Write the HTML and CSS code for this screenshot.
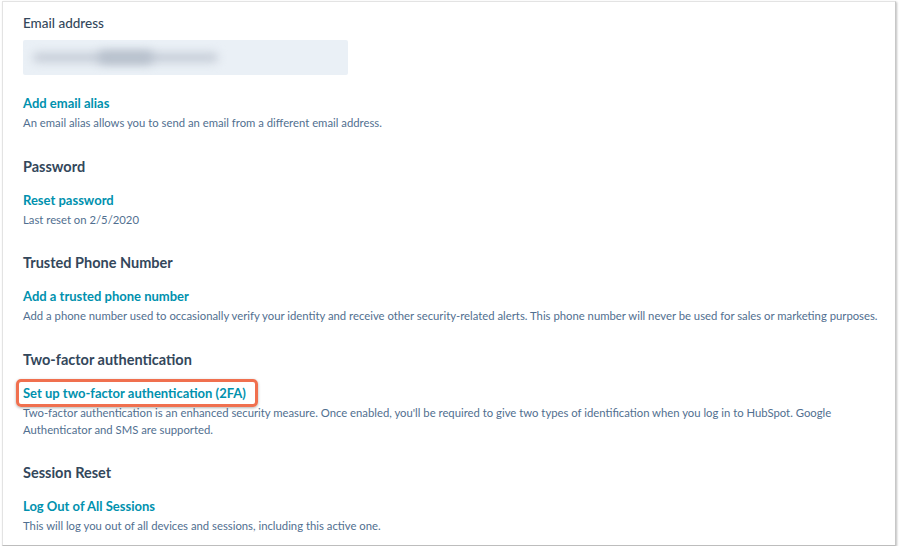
FILE: index.html
```html
<!DOCTYPE html>
<html>
<head>
<meta charset="utf-8">
<link rel="stylesheet" href="styles.css">
</head>
<body>
<div class="window">
  <div class="content">
    <div class="field-label">Email address</div>
    <div class="input"><div class="blur"></div><div class="blur blur2"></div></div>
    <div class="link first-link">Add email alias</div>
    <div class="desc">An email alias allows you to send an email from a different email address.</div>

    <div class="heading">Password</div>
    <div class="link">Reset password</div>
    <div class="desc">Last reset on 2/5/2020</div>

    <div class="heading">Trusted Phone Number</div>
    <div class="link">Add a trusted phone number</div>
    <div class="desc">Add a phone number used to occasionally verify your identity and receive other security-related alerts. This phone number will never be used for sales or marketing purposes.</div>

    <div class="heading">Two-factor authentication</div>
    <div class="link"><span class="highlight">Set up two-factor authentication (2FA)</span></div>
    <div class="desc">Two-factor authentication is an enhanced security measure. Once enabled, you'll be required to give two types of identification when you log in to HubSpot. Google Authenticator and SMS are supported.</div>

    <div class="heading">Session Reset</div>
    <div class="link">Log Out of All Sessions</div>
    <div class="desc">This will log you out of all devices and sessions, including this active one.</div>
  </div>
</div>
</body>
</html>
```
FILE: styles.css
```css
html, body {
  margin: 0;
  padding: 0;
  background: #ffffff;
}
body {
  font-family: Lato, "Open Sans", sans-serif;
  -webkit-font-smoothing: antialiased;
}
.window {
  margin: 1px 0 0 2px;
  width: 894px;
  height: 545px;
  border: 1px solid #e3e3e3;
  border-right-color: #c8c8c8;
  border-bottom-color: #bdbdbd;
  box-shadow: 1px 1px 2px rgba(0,0,0,0.25);
  box-sizing: border-box;
  overflow: hidden;
  background: #fff;
}
.content {
  padding: 13px 0 0 20px;
}
.field-label {
  font-size: 13.5px;
  color: #33475b;
  line-height: 16px;
  font-weight: 500;
}
.input {
  margin-top: 9px;
  width: 325px;
  height: 35px;
  background: #eaf0f6;
  border-radius: 2px;
  position: relative;
  overflow: hidden;
}
.blur {
  position: absolute;
  left: 10px;
  top: 13px;
  width: 185px;
  height: 9px;
  background: #c3cad5;
  border-radius: 5px;
  filter: blur(5px);
}
.blur2 {
  left: 75px;
  top: 11px;
  width: 55px;
  height: 13px;
  background: #b7c0cc;
}
.link {
  font-size: 13px;
  font-weight: 700;
  color: #0091ae;
  line-height: 16px;
  margin-top: 16px;
}
.first-link {
  margin-top: 20px;
}
.desc {
  font-size: 11.3px;
  color: #516f90;
  line-height: 17px;
  margin-top: 3px;
  padding-right: 12px;
}
.heading {
  font-size: 14.5px;
  font-weight: 700;
  color: #33475b;
  line-height: 18px;
  margin-top: 26.6px;
}
.highlight {
  display: inline-block;
  position: relative;
}
.highlight::after {
  content: "";
  position: absolute;
  left: -7px;
  right: -12px;
  top: -6px;
  bottom: -6px;
  border: 3px solid #f0704f;
  border-radius: 5px;
  box-shadow: 0 1px 3px rgba(0,0,0,0.3);
}
```
